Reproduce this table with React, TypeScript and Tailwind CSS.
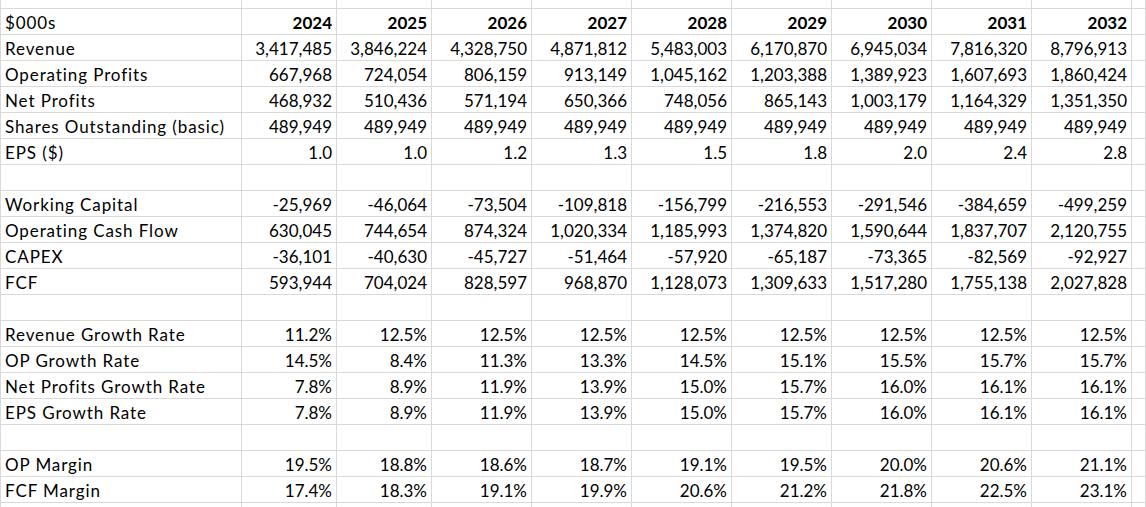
const years = ["2024", "2025", "2026", "2027", "2028", "2029", "2030", "2031", "2032"]

type Row = { label: string; values: string[] } | null

const rows: Row[] = [
  {
    label: "Revenue",
    values: ["3,417,485", "3,846,224", "4,328,750", "4,871,812", "5,483,003", "6,170,870", "6,945,034", "7,816,320", "8,796,913"],
  },
  {
    label: "Operating Profits",
    values: ["667,968", "724,054", "806,159", "913,149", "1,045,162", "1,203,388", "1,389,923", "1,607,693", "1,860,424"],
  },
  {
    label: "Net Profits",
    values: ["468,932", "510,436", "571,194", "650,366", "748,056", "865,143", "1,003,179", "1,164,329", "1,351,350"],
  },
  {
    label: "Shares Outstanding (basic)",
    values: ["489,949", "489,949", "489,949", "489,949", "489,949", "489,949", "489,949", "489,949", "489,949"],
  },
  {
    label: "EPS ($)",
    values: ["1.0", "1.0", "1.2", "1.3", "1.5", "1.8", "2.0", "2.4", "2.8"],
  },
  null,
  {
    label: "Working Capital",
    values: ["-25,969", "-46,064", "-73,504", "-109,818", "-156,799", "-216,553", "-291,546", "-384,659", "-499,259"],
  },
  {
    label: "Operating Cash Flow",
    values: ["630,045", "744,654", "874,324", "1,020,334", "1,185,993", "1,374,820", "1,590,644", "1,837,707", "2,120,755"],
  },
  {
    label: "CAPEX",
    values: ["-36,101", "-40,630", "-45,727", "-51,464", "-57,920", "-65,187", "-73,365", "-82,569", "-92,927"],
  },
  {
    label: "FCF",
    values: ["593,944", "704,024", "828,597", "968,870", "1,128,073", "1,309,633", "1,517,280", "1,755,138", "2,027,828"],
  },
  null,
  {
    label: "Revenue Growth Rate",
    values: ["11.2%", "12.5%", "12.5%", "12.5%", "12.5%", "12.5%", "12.5%", "12.5%", "12.5%"],
  },
  {
    label: "OP Growth Rate",
    values: ["14.5%", "8.4%", "11.3%", "13.3%", "14.5%", "15.1%", "15.5%", "15.7%", "15.7%"],
  },
  {
    label: "Net Profits Growth Rate",
    values: ["7.8%", "8.9%", "11.9%", "13.9%", "15.0%", "15.7%", "16.0%", "16.1%", "16.1%"],
  },
  {
    label: "EPS Growth Rate",
    values: ["7.8%", "8.9%", "11.9%", "13.9%", "15.0%", "15.7%", "16.0%", "16.1%", "16.1%"],
  },
  null,
  {
    label: "OP Margin",
    values: ["19.5%", "18.8%", "18.6%", "18.7%", "19.1%", "19.5%", "20.0%", "20.6%", "21.1%"],
  },
  {
    label: "FCF Margin",
    values: ["17.4%", "18.3%", "19.1%", "19.9%", "20.6%", "21.2%", "21.8%", "22.5%", "23.1%"],
  },
  null,
]

// excel-ish column widths: label col, two narrow, then 100px each
const gridCols = "grid grid-cols-[241px_95px_95px_repeat(7,100px)_1fr] border-l border-[#d9d9d9]"
const cell = "border-r border-b border-[#d9d9d9] flex items-end pb-[1px] leading-[20px] whitespace-nowrap overflow-hidden"

function SheetRow({ label, values, bold }: { label: string; values: string[]; bold?: boolean }) {
  return (
    <div className={`${gridCols} h-[26px]`}>
      <div className={`${cell} pl-[4px] tracking-[0.9px]`}>{label}</div>
      {values.map((v, i) => (
        <div key={i} className={`${cell} justify-end pr-[4px] ${bold ? "font-bold" : ""}`}>
          {v}
        </div>
      ))}
      <div className={cell} />
    </div>
  )
}

export default function App() {
  const blanks = Array(9).fill("")
  return (
    <div className="w-[1146px] h-[507px] overflow-hidden bg-white text-black text-[17px] font-['Lato',sans-serif]">
      <div className={`${gridCols} h-[9px]`}>
        {Array.from({ length: 11 }).map((_, i) => (
          <div key={i} className="border-r border-b border-[#d9d9d9]" />
        ))}
      </div>
      <SheetRow label="$000s" values={years} bold />
      {rows.map((r, i) =>
        r ? <SheetRow key={i} label={r.label} values={r.values} /> : <SheetRow key={i} label="" values={blanks} />,
      )}
    </div>
  )
}
